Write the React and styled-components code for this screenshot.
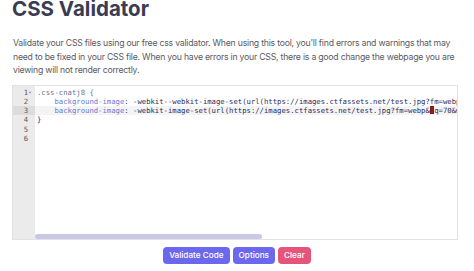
import React from 'react';
import styled, { createGlobalStyle } from 'styled-components';

const GlobalStyle = createGlobalStyle`
  html, body {
    margin: 0;
    padding: 0;
    background: #ffffff;
    overflow: hidden;
  }
  body {
    font-family: Inter, "Noto Sans", sans-serif;
  }
`;

const introLines = [
  "Validate your CSS files using our free css validator. When using this tool, you'll find errors and warnings that may",
  'need to be fixed in your CSS file. When you have errors in your CSS, there is a good change the webpage you are',
  'viewing will not render correctly.',
];

const codeLines = [
  [{ t: '.css-cnatj8 {', c: 'sel' }],
  [
    { t: '    ' },
    { t: 'background-image', c: 'prop' },
    { t: ': -webkit--webkit-image-set(url(https://images.ctfassets.net/test.jpg?fm=webp&q=70&w=1200)' },
  ],
  [
    { t: '    ' },
    { t: 'background-image', c: 'prop' },
    { t: ': -webkit-image-set(url(https://images.ctfassets.net/test.jpg?fm=webp&' },
    { t: '', c: 'cursor' },
    { t: 'q=70&w=1200)' },
  ],
  [{ t: '}' }],
  [],
  [],
];

const App = () => {
  return (
    <Page>
      <GlobalStyle />
      <Title>CSS Validator</Title>
      <Intro>
        {introLines.map((l, i) => (
          <IntroLine key={i}>{l}</IntroLine>
        ))}
      </Intro>
      <Editor>
        <Gutter>
          {codeLines.map((_, i) => (
            <LineNo key={i} active={i === 2}>
              {i + 1}
              <Fold>{i === 0 ? '\u25BE' : ''}</Fold>
            </LineNo>
          ))}
        </Gutter>
        <CodeArea>
          <Lines>
            {codeLines.map((parts, i) => (
              <CodeLine key={i} active={i === 2}>
                {parts.map((p, j) =>
                  p.c === 'cursor' ? (
                    <Cursor key={j} />
                  ) : (
                    <Token key={j} kind={p.c}>
                      {p.t}
                    </Token>
                  )
                )}
              </CodeLine>
            ))}
          </Lines>
          <ScrollTrack>
            <ScrollThumb />
          </ScrollTrack>
        </CodeArea>
      </Editor>
      <Actions>
        <Button>Validate Code</Button>
        <Button>Options</Button>
        <Button danger>Clear</Button>
      </Actions>
    </Page>
  );
};

export default App;

const Page = styled.div`
  width: 474px;
  height: 271px;
  box-sizing: border-box;
  padding: 0 16px 0 12px;
  display: flex;
  flex-direction: column;
`;

const Title = styled.h1`
  margin: -1.5px 0 0 0;
  height: 20px;
  font-family: Inter, sans-serif;
  font-size: 20.5px;
  font-weight: 700;
  line-height: 20px;
  color: #3a3c53;
`;

const Intro = styled.div`
  margin: 18.5px 0 0 1px;
  font-family: Inter, sans-serif;
  font-size: 8.7px;
  letter-spacing: -0.22px;
  line-height: 13.5px;
  color: #5a5a62;
`;

const IntroLine = styled.div`
  white-space: nowrap;
`;

const Editor = styled.div`
  margin-top: 7px;
  height: 155px;
  flex: none;
  display: flex;
  border: 1px solid #e2e2e6;
  box-sizing: border-box;
  overflow: hidden;
`;

const Gutter = styled.div`
  width: 22px;
  flex: none;
  background: #ebebeb;
  padding-top: 2px;
`;

const LineNo = styled.div`
  height: 9.3px;
  line-height: 9.3px;
  font-family: "DejaVu Sans Mono", monospace;
  font-size: 7.25px;
  color: #555;
  padding-right: 3px;
  display: flex;
  justify-content: flex-end;
  background: ${(p) => (p.active ? '#dcdcdc' : 'transparent')};
`;

const Fold = styled.span`
  display: inline-block;
  width: 4px;
  font-size: 5px;
  color: #777;
  text-align: center;
`;

const CodeArea = styled.div`
  flex: 1;
  min-width: 0;
  display: flex;
  flex-direction: column;
  background: #fff;
`;

const Lines = styled.div`
  flex: 1;
  padding-top: 2px;
  overflow: hidden;
`;

const CodeLine = styled.div`
  height: 9.3px;
  line-height: 9.3px;
  padding-left: 2px;
  white-space: pre;
  font-family: "DejaVu Sans Mono", monospace;
  font-size: 7.25px;
  color: #2a2c63;
  background: ${(p) => (p.active ? '#f4f4f4' : 'transparent')};
`;

const tokenColors = {
  sel: '#6b7191',
  prop: '#6c7bd0',
};

const Token = styled.span`
  color: ${(p) => tokenColors[p.kind] || '#2a2c63'};
`;

const Cursor = styled.span`
  display: inline-block;
  width: 4.4px;
  height: 8px;
  vertical-align: -1px;
  background: #8a1d1d;
`;

const ScrollTrack = styled.div`
  height: 5px;
  flex: none;
`;

const ScrollThumb = styled.div`
  width: 227px;
  height: 5px;
  border-radius: 3px;
  background: #c9c7e4;
`;

const Actions = styled.div`
  display: flex;
  justify-content: center;
  gap: 3px;
  margin-top: 7px;
  padding-left: 4px;
`;

const Button = styled.button`
  height: 17px;
  padding: 0 6px;
  border: none;
  border-radius: 4px;
  background: ${(p) => (p.danger ? '#e5557a' : '#6b68ee')};
  color: #fff;
  font-family: Inter, sans-serif;
  font-size: 8.2px;
  font-weight: 500;
  cursor: pointer;
`;
